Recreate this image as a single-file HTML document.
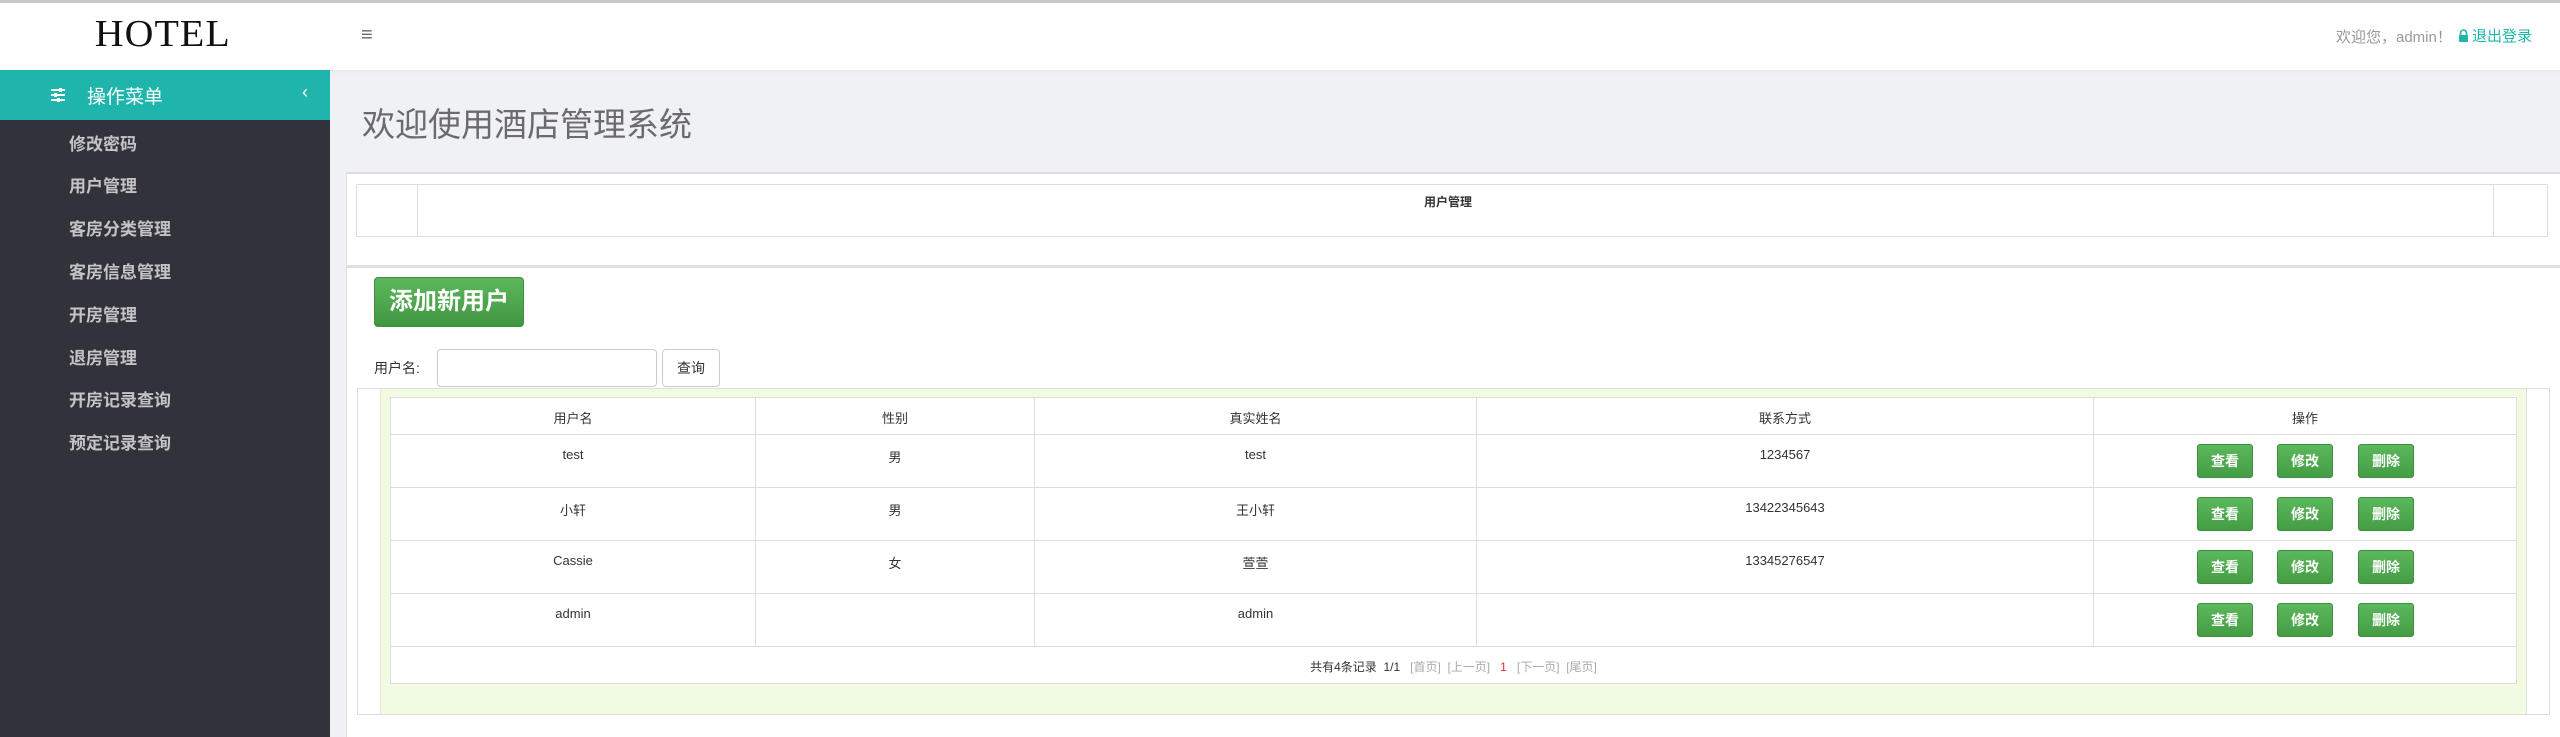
<!DOCTYPE html>
<html><head><meta charset="utf-8"><style>
*{margin:0;padding:0;box-sizing:border-box}
body{width:2560px;height:737px;overflow:hidden;background:#f0f1f5;font-family:"Liberation Sans","Noto Sans CJK SC",sans-serif;position:relative;color:#333}
.a{position:absolute}
#top{left:0;top:0;width:2560px;height:3px;background:#c8c8c8}
#hdr{left:0;top:3px;width:2560px;height:67px;background:#fff;box-shadow:0 1px 3px rgba(0,0,0,.06)}
#logo{left:98px;top:12px;font-family:"Liberation Serif",serif;font-size:38px;color:#111;letter-spacing:1px;transform:scaleX(1.05)}
#side{left:0;top:70px;width:330px;height:667px;background:#32323a}
#mh{left:0;top:70px;width:330px;height:50px;background:#1fb5ac;color:#fff}
.mi{position:absolute;left:69px;font-size:17px;font-weight:bold;color:#c4c4c8}
#title{left:362px;top:98px;font-size:33px;color:#6b6b6b}
#panel{left:346px;top:172px;width:2214px;height:565px;background:#fff;border-top:2px solid #dedede;border-left:1px solid #e0e0e0}
table{border-collapse:collapse}
.btn{position:absolute;width:56px;height:34px;background:linear-gradient(#5cb85c,#449d44);border:1px solid #3e8f3e;border-radius:3px;color:#fff;font-size:14px;font-weight:bold;text-align:center;line-height:32px}
#dt td{border:1px solid #ddd;text-align:center;vertical-align:top;font-size:13px;color:#333}
</style></head><body>
<div class="a" id="hdr"></div><div class="a" id="top"></div>
<div class="a" id="logo">HOTEL</div>
<div class="a" style="left:361px;top:24px;font-size:20px;color:#666">≡</div>
<div class="a" style="left:2336px;top:26px;font-size:15px;color:#999">欢迎您，admin！</div>
<svg class="a" style="left:2458px;top:29px" width="11" height="13" viewBox="0 0 11 13"><path d="M2.5 6V4a3 3 0 0 1 6 0v2" stroke="#1fb5ac" stroke-width="1.6" fill="none"/><rect x="1" y="6" width="9" height="7" rx="1" fill="#1fb5ac"/></svg>
<div class="a" style="left:2472px;top:25px;font-size:15px;color:#1fb5ac">退出登录</div>
<div class="a" id="side"></div>
<div class="a" id="mh">
<svg class="a" style="left:51px;top:18px" width="14" height="14" viewBox="0 0 14 14"><g stroke="#fff" stroke-width="2"><path d="M0 2h14M0 7h14M0 12h14"/></g><g fill="#fff"><rect x="8" y="0" width="3" height="4"/><rect x="3" y="5" width="3" height="4"/><rect x="6" y="10" width="3" height="4"/></g></svg>
<div class="a" style="left:87px;top:12px;font-size:19px">操作菜单</div>
<div class="a" style="left:302px;top:12px;font-size:18px">‹</div>
</div>
<div class="mi" style="top:130px">修改密码</div>
<div class="mi" style="top:172px">用户管理</div>
<div class="mi" style="top:215px">客房分类管理</div>
<div class="mi" style="top:258px">客房信息管理</div>
<div class="mi" style="top:301px">开房管理</div>
<div class="mi" style="top:344px">退房管理</div>
<div class="mi" style="top:386px">开房记录查询</div>
<div class="mi" style="top:429px">预定记录查询</div>
<div class="a" id="title">欢迎使用酒店管理系统</div>
<div class="a" id="panel"></div>
<div class="a" style="left:356px;top:184px;width:2192px;height:53px;border:1px solid #ddd"></div>
<div class="a" style="left:417px;top:184px;width:1px;height:53px;background:#ddd"></div>
<div class="a" style="left:2493px;top:184px;width:1px;height:53px;background:#ddd"></div>
<div class="a" style="left:1424px;top:193px;font-size:12px;font-weight:bold;color:#333">用户管理</div>
<div class="a" style="left:346px;top:265px;width:2214px;height:3px;background:#e0e0e0"></div>
<div class="a" style="left:374px;top:277px;width:150px;height:50px;background:linear-gradient(#5cb85c,#419641);border:1px solid #3e8f3e;border-radius:4px;color:#fff;font-size:24px;font-weight:bold;text-align:center;line-height:48px">添加新用户</div>
<div class="a" style="left:374px;top:358px;font-size:14px;color:#333">用户名:</div>
<div class="a" style="left:437px;top:349px;width:220px;height:38px;border:1px solid #ccc;border-radius:4px;background:#fff"></div>
<div class="a" style="left:662px;top:349px;width:58px;height:38px;border:1px solid #ccc;border-radius:4px;background:#fff;font-size:14px;text-align:center;line-height:36px">查询</div>
<div class="a" style="left:357px;top:388px;width:2193px;height:327px;border:1px solid #ddd;background:#fff"></div>
<div class="a" style="left:380px;top:389px;width:2147px;height:325px;background:#f1fbe2;border-right:1px solid #ddd;border-left:1px solid #e4ecd8"></div>
<table id="dt" class="a" style="left:390px;top:397px;width:2127px;background:#fff">
<tr style="height:37px"><td style="width:365px;padding-top:10px">用户名</td><td style="width:279px;padding-top:10px">性别</td><td style="width:442px;padding-top:10px">真实姓名</td><td style="width:617px;padding-top:10px">联系方式</td><td style="padding-top:10px">操作</td></tr>
<tr style="height:53px"><td style="padding-top:12px">test</td><td style="padding-top:12px">男</td><td style="padding-top:12px">test</td><td style="padding-top:12px">1234567</td><td></td></tr>
<tr style="height:53px"><td style="padding-top:12px">小轩</td><td style="padding-top:12px">男</td><td style="padding-top:12px">王小轩</td><td style="padding-top:12px">13422345643</td><td></td></tr>
<tr style="height:53px"><td style="padding-top:12px">Cassie</td><td style="padding-top:12px">女</td><td style="padding-top:12px">萱萱</td><td style="padding-top:12px">13345276547</td><td></td></tr>
<tr style="height:53px"><td style="padding-top:12px">admin</td><td></td><td style="padding-top:12px">admin</td><td></td><td></td></tr>
<tr style="height:37px"><td colspan="5" style="padding-top:11px;font-size:12px">共有4条记录&nbsp; 1/1 &nbsp; <span style="color:#aaa">[首页]&nbsp; [上一页]</span> &nbsp; <span style="color:#d33">1</span> &nbsp; <span style="color:#aaa">[下一页]&nbsp; [尾页]</span></td></tr>
</table>
<div class="btn" style="left:2197px;top:444px">查看</div><div class="btn" style="left:2277px;top:444px">修改</div><div class="btn" style="left:2358px;top:444px">删除</div>
<div class="btn" style="left:2197px;top:497px">查看</div><div class="btn" style="left:2277px;top:497px">修改</div><div class="btn" style="left:2358px;top:497px">删除</div>
<div class="btn" style="left:2197px;top:550px">查看</div><div class="btn" style="left:2277px;top:550px">修改</div><div class="btn" style="left:2358px;top:550px">删除</div>
<div class="btn" style="left:2197px;top:603px">查看</div><div class="btn" style="left:2277px;top:603px">修改</div><div class="btn" style="left:2358px;top:603px">删除</div>
</body></html>
